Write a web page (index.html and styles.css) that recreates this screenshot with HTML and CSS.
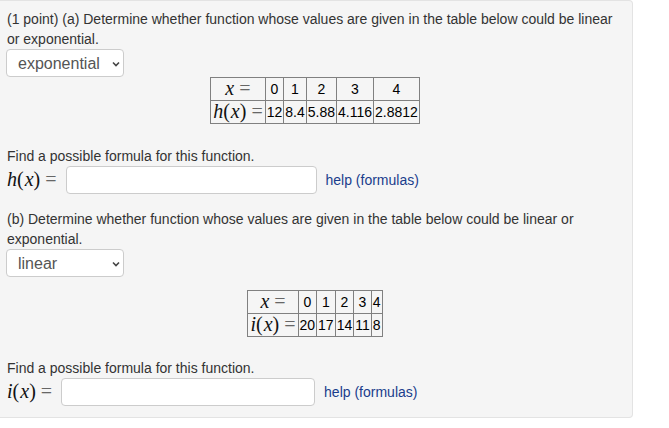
FILE: index.html
```html
<!DOCTYPE html>
<html>
<head>
<meta charset="utf-8">
<link rel="stylesheet" href="styles.css">
</head>
<body>
<div class="panel">
  <p class="q">(1 point) (a) Determine whether function whose values are given in the table below could be linear or exponential.</p>
  <select class="sel"><option>exponential</option><option>linear</option></select>
  <table class="vals vals-a">
    <tr><td class="lbl"><span class="mi">x</span><span class="eq">=</span></td><td>0</td><td>1</td><td>2</td><td>3</td><td>4</td></tr>
    <tr><td class="lbl"><span class="mi">h</span><span class="mo">(</span><span class="mi">x</span><span class="mo">)</span><span class="eq">=</span></td><td>12</td><td>8.4</td><td>5.88</td><td>4.116</td><td>2.8812</td></tr>
  </table>
  <p class="find find-a">Find a possible formula for this function.</p>
  <div class="answer">
    <span class="lbl math"><span class="mi">h</span><span class="mo">(</span><span class="mi">x</span><span class="mo">)</span><span class="eq">=</span></span>
    <input class="ans ans-a" type="text">
    <a class="help" href="#">help (formulas)</a>
  </div>
  <p class="q q-b">(b) Determine whether function whose values are given in the table below could be linear or exponential.</p>
  <select class="sel"><option>linear</option><option>exponential</option></select>
  <table class="vals vals-b">
    <tr><td class="lbl"><span class="mi">x</span><span class="eq">=</span></td><td>0</td><td>1</td><td>2</td><td>3</td><td>4</td></tr>
    <tr><td class="lbl"><span class="mi">i</span><span class="mo">(</span><span class="mi">x</span><span class="mo">)</span><span class="eq">=</span></td><td>20</td><td>17</td><td>14</td><td>11</td><td>8</td></tr>
  </table>
  <p class="find find-b">Find a possible formula for this function.</p>
  <div class="answer">
    <span class="lbl math"><span class="mi">i</span><span class="mo">(</span><span class="mi">x</span><span class="mo">)</span><span class="eq">=</span></span>
    <input class="ans ans-b" type="text">
    <a class="help" href="#">help (formulas)</a>
  </div>
</div>
</body>
</html>
```
FILE: styles.css
```css
html, body {
  margin: 0;
  padding: 0;
  background: #ffffff;
}
body {
  font-family: "Liberation Sans", Arial, sans-serif;
  font-size: 14px;
  line-height: 20px;
  color: #333333;
}
.panel {
  box-sizing: border-box;
  width: 633px;
  height: 418px;
  background: #f5f5f5;
  border: 1px solid #e3e3e3;
  border-left: none;
  border-radius: 0 4px 4px 0;
  padding: 8px 8px 0 6px;
}
.q {
  margin: 0;
  padding-left: 1px;
}
.q-b {
  margin-top: 15px;
}
.sel {
  display: block;
  -webkit-appearance: none;
  appearance: none;
  box-sizing: border-box;
  width: 118px;
  height: 28px;
  margin: 0;
  padding: 0 0 0 11px;
  border: 1px solid #cccccc;
  border-radius: 4px;
  background-color: #ffffff;
  background-image: url("data:image/svg+xml;utf8,<svg xmlns='http://www.w3.org/2000/svg' width='8' height='6' viewBox='0 0 8 6'><path d='M1 1.5 L4 4.5 L7 1.5' fill='none' stroke='%23444' stroke-width='1.6'/></svg>");
  background-repeat: no-repeat;
  background-position: 105px 11px;
  font-family: "Liberation Sans", Arial, sans-serif;
  font-size: 16px;
  color: #555555;
}
.vals {
  border-collapse: collapse;
  margin: 0 auto;
  border: 1px solid #808080;
  font-size: 14px;
  color: #000;
}
.vals td {
  border: 1px solid #808080;
  padding: 0 1px;
  height: 22px;
  text-align: center;
  line-height: 20px;
}
.vals-a {
  margin-top: 0;
}
.vals-b {
  margin-top: 13px;
}
.vals td.lbl {
  padding: 0 2px;
}
.mi {
  font-family: "Liberation Serif", "Times New Roman", serif;
  font-style: italic;
  font-size: 20px;
  color: #111;
}
.mo {
  font-family: "Liberation Serif", "Times New Roman", serif;
  font-size: 20px;
  color: #111;
}
.eq {
  font-family: "Liberation Serif", "Times New Roman", serif;
  font-size: 20px;
  color: #666;
  margin-left: 5px;
}
.mi + .mo + .mi { margin-left: 1px; }
.find {
  margin: 0;
  padding-left: 1px;
}
.find-a { margin-top: 22px; }
.find-b { margin-top: 21px; }
.answer {
  display: flex;
  align-items: center;
  height: 28px;
  margin-top: 0;
}
.answer .lbl {
  padding-left: 1px;
  color: #000;
}
.ans {
  box-sizing: border-box;
  height: 28px;
  border: 1px solid #cccccc;
  border-radius: 4px;
  background: #ffffff;
  margin: 0 0 0 9px;
  padding: 0 6px;
  outline: none;
}
.ans-a { width: 251px; }
.ans-b { width: 254px; }
.help {
  margin-left: 9px;
  color: #1a3d8c;
  text-decoration: none;
  font-size: 14px;
}
```
